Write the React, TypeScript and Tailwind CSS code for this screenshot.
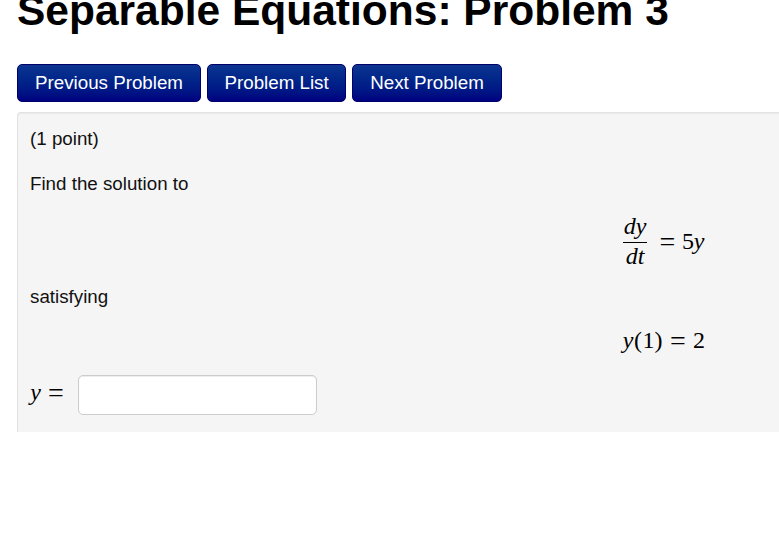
import React from "react";

function Btn({ children, pad = "px-[17px]" }: { children: React.ReactNode; pad?: string }) {
  return (
    <button
      type="button"
      className={
        "rounded-[5px] border border-[#00006a] bg-gradient-to-b from-[#0d3590] to-[#000080] pt-[6px] pb-[7px] text-[18.75px] leading-[23px] text-white whitespace-nowrap " +
        pad
      }
    >
      {children}
    </button>
  );
}

export default function App() {
  return (
    <div className="w-[779px] h-[533px] overflow-hidden bg-white font-['Liberation_Sans',Arial,sans-serif]">
      <div className="pl-[17px]">
        <h1 className="mt-[-13px] text-[42.5px] leading-[48px] font-bold text-black whitespace-nowrap">
          Separable Equations: Problem 3
        </h1>
        <div className="mt-[29px] flex gap-[6px]">
          <Btn>Previous Problem</Btn>
          <Btn pad="px-[16.5px]">Problem List</Btn>
          <Btn>Next Problem</Btn>
        </div>
        <div className="mt-[10px] w-[1292px] rounded-tl-[4px] border-l border-t border-[#e3e3e3] bg-[#f5f5f5] shadow-[inset_0_1px_1px_rgba(0,0,0,0.05)] px-[12px] pt-[14px] pb-[17px] text-[18.75px] leading-[23px] text-[#111111]">
          <p>(1 point)</p>
          <p className="mt-[22px]">Find the solution to</p>

          <div className="mt-[21px] flex justify-center items-center font-['Liberation_Serif',serif] text-[24px] text-black">
            <span className="inline-flex flex-col w-[26px] px-[1px]">
              <span className="text-center leading-[20px] pb-[6px] italic">dy</span>
              <span className="h-px bg-black"></span>
              <span className="text-center leading-[20px] pt-[3px] italic">dt</span>
            </span>
            <span className="flex leading-[23px]">
              <span className="ml-[10px] w-[19px] text-center text-[28px]">=</span>
              <span className="ml-[5px] w-[11px] text-center">5</span>
              <span className="w-[12px] text-center italic">y</span>
            </span>
          </div>

          <p className="mt-[19px]">satisfying</p>

          <div className="mt-[21px] flex justify-center font-['Liberation_Serif',serif] text-[24px] leading-[23px] text-black">
            <span className="w-[11px] text-center italic">y</span>
            <span className="w-[9px] text-center">(</span>
            <span className="w-[11.5px] text-center">1</span>
            <span className="w-[9px] text-center">)</span>
            <span className="ml-[6px] w-[18px] text-center text-[28px]">=</span>
            <span className="ml-[6px] w-[11.5px] text-center">2</span>
          </div>

          <div className="mt-[23px] flex items-center">
            <span className="flex mb-[6px] font-['Liberation_Serif',serif] text-[24px] leading-[23px] text-black">
              <span className="w-[11px] text-center italic">y</span>
              <span className="ml-[6px] w-[18px] text-center text-[28px]">=</span>
            </span>
            <input
              type="text"
              aria-label="answer"
              className="ml-[13px] w-[239px] h-[40px] rounded-[5px] border border-[#cccccc] bg-white shadow-[inset_0_1px_1px_rgba(0,0,0,0.075)] px-[6px] text-[18.75px] outline-none"
            />
          </div>
        </div>
      </div>
    </div>
  );
}
